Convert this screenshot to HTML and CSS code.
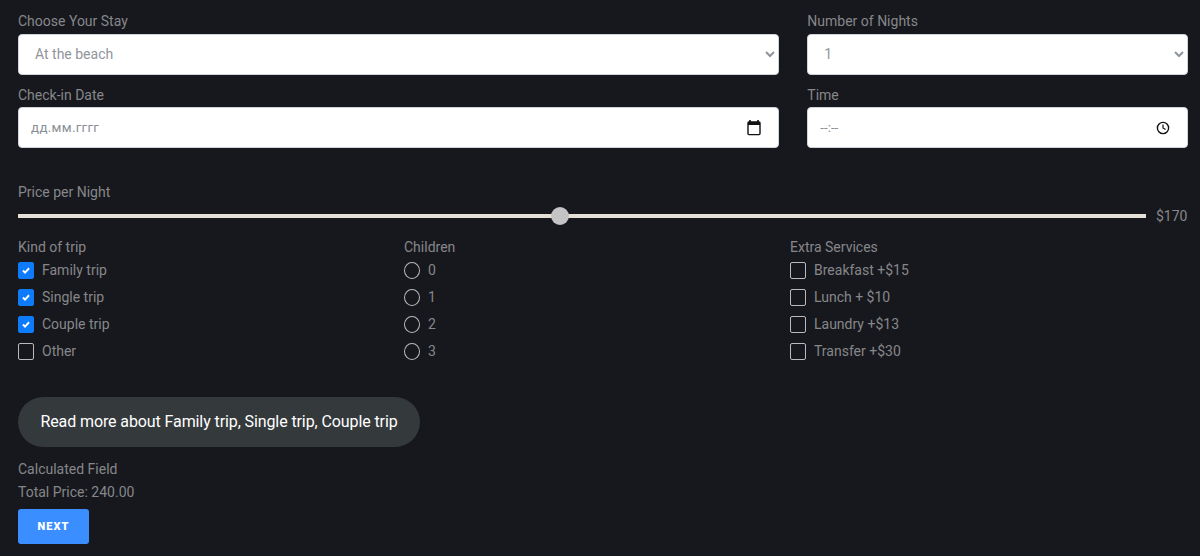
FILE: index.html
```html
<!DOCTYPE html>
<html lang="en">
<head>
    <meta charset="UTF-8">
    <title>Booking form</title>
    <link rel="stylesheet" href="styles.css">
</head>
<body>
    <form class="booking">
        <div class="fields">
            <div class="field">
                <label>Choose Your Stay</label>
                <select class="control"><option>At the beach</option></select>
            </div>
            <div class="field">
                <label>Number of Nights</label>
                <select class="control"><option>1</option></select>
            </div>
            <div class="field">
                <label>Check-in Date</label>
                <div class="control picker">
                    <span class="mask mask-date">дд.мм.гггг</span>
                    <svg class="picker-icon" width="14" height="16" viewBox="0 0 14 16"><path d="M3 0v2M11 0v2" stroke="#111" stroke-width="1.6" fill="none"/><rect x="1" y="2" width="12" height="12.6" rx="1" stroke="#111" stroke-width="1.4" fill="none"/><rect x="1" y="2" width="12" height="3" fill="#111"/></svg>
                </div>
            </div>
            <div class="field">
                <label>Time</label>
                <div class="control picker">
                    <span class="mask">--:--</span>
                    <svg class="picker-icon" width="14" height="14" viewBox="0 0 14 14"><circle cx="7" cy="7" r="5.6" stroke="#111" stroke-width="1.4" fill="none"/><path d="M7 3.5V7l2.6 1.6" stroke="#111" stroke-width="1.2" fill="none"/></svg>
                </div>
            </div>
        </div>

        <div class="price">
            <label>Price per Night</label>
            <div class="slider-row">
                <div class="track"><span class="thumb"></span></div>
                <span class="price-value">$170</span>
            </div>
        </div>

        <div class="options">
            <div class="group">
                <label>Kind of trip</label>
                <div class="option"><span class="box checked"><svg width="8" height="7" viewBox="0 0 10 8"><path d="M1.2 4l2.6 2.6 5-5.4" stroke="#fff" stroke-width="2.4" fill="none"/></svg></span>Family trip</div>
                <div class="option"><span class="box checked"><svg width="8" height="7" viewBox="0 0 10 8"><path d="M1.2 4l2.6 2.6 5-5.4" stroke="#fff" stroke-width="2.4" fill="none"/></svg></span>Single trip</div>
                <div class="option"><span class="box checked"><svg width="8" height="7" viewBox="0 0 10 8"><path d="M1.2 4l2.6 2.6 5-5.4" stroke="#fff" stroke-width="2.4" fill="none"/></svg></span>Couple trip</div>
                <div class="option"><span class="box"></span>Other</div>
            </div>
            <div class="group">
                <label>Children</label>
                <div class="option"><span class="box round"></span>0</div>
                <div class="option"><span class="box round"></span>1</div>
                <div class="option"><span class="box round"></span>2</div>
                <div class="option"><span class="box round"></span>3</div>
            </div>
            <div class="group">
                <label>Extra Services</label>
                <div class="option"><span class="box"></span>Breakfast +$15</div>
                <div class="option"><span class="box"></span>Lunch + $10</div>
                <div class="option"><span class="box"></span>Laundry +$13</div>
                <div class="option"><span class="box"></span>Transfer +$30</div>
            </div>
        </div>

        <button type="button" class="read-more">Read more about Family trip, Single trip, Couple trip</button>

        <div class="calc-label">Calculated Field</div>
        <div class="calc-total">Total Price: 240.00</div>
        <button type="button" class="next">NEXT</button>
    </form>
</body>
</html>
```

FILE: styles.css
```css
* {
    box-sizing: border-box;
}
html, body {
    margin: 0;
    height: 100%;
    overflow: hidden;
}
body {
    background-color: #17181d;
    color: #86878a;
    font-family: Roboto, "Liberation Sans", sans-serif;
    font-size: 14px;
    line-height: 20px;
}
.booking {
    padding: 11px 12px 0 18px;
}
label {
    display: block;
}
.fields {
    display: grid;
    grid-template-columns: 2fr 1fr;
    column-gap: 28px;
}
.field label {
    margin-bottom: 3px;
}
.field:nth-child(n+3) label {
    margin-top: 1px;
    margin-bottom: 2px;
}
.field {
    height: 73px;
}
.control {
    display: block;
    width: 100%;
    height: 41px;
    border: 1px solid #ced4da;
    border-radius: 4px;
    background-color: #fff;
    color: #8f959b;
    font-family: inherit;
    font-size: 14px;
    padding: 0 12px 2px;
}
.picker {
    display: flex;
    align-items: center;
    justify-content: space-between;
    padding-bottom: 0;
}
.mask {
    font-size: 13.3px;
    color: #8a8f94;
}
.mask-date {
    letter-spacing: 0.3px;
}
.picker-icon {
    margin-right: 5px;
}
.price {
    margin-top: 25px;
}
.slider-row {
    display: flex;
    align-items: center;
    gap: 10px;
    margin-top: 4px;
}
.track {
    position: relative;
    flex: 1;
    height: 4px;
    background-color: #e4e0d8;
}
.thumb {
    position: absolute;
    left: 533px;
    top: -7px;
    width: 18px;
    height: 18px;
    border-radius: 50%;
    background-color: #c4c4c4;
}
.price-value {
    min-width: 32px;
}
.options {
    display: grid;
    grid-template-columns: repeat(3, 386px);
    margin-top: 11px;
}
.option {
    display: flex;
    align-items: center;
    height: 27px;
    padding-bottom: 2px;
}
.box {
    display: flex;
    align-items: center;
    justify-content: center;
    width: 16px;
    height: 17px;
    margin-top: 2px;
    margin-right: 8px;
    border: 1px solid #b9babb;
    border-radius: 2px;
}
.box.checked {
    background-color: #0d7bfa;
    border-color: #0d7bfa;
}
.box.round {
    border-radius: 50%;
}
.read-more {
    display: block;
    margin-top: 32px;
    height: 50px;
    width: 402px;
    padding: 0 0 2px;
    border: none;
    border-radius: 25px;
    background-color: #34393c;
    color: #fff;
    font-family: inherit;
    font-size: 16px;
    letter-spacing: -0.1px;
}
.calc-label {
    margin-top: 12px;
}
.calc-total {
    margin-top: 3px;
}
.next {
    display: block;
    width: 71px;
    height: 35px;
    margin-top: 7px;
    border: none;
    border-radius: 3px;
    background-color: #3a8eff;
    color: #fff;
    font-family: inherit;
    font-size: 11px;
    font-weight: 900;
    letter-spacing: 1px;
}
```
